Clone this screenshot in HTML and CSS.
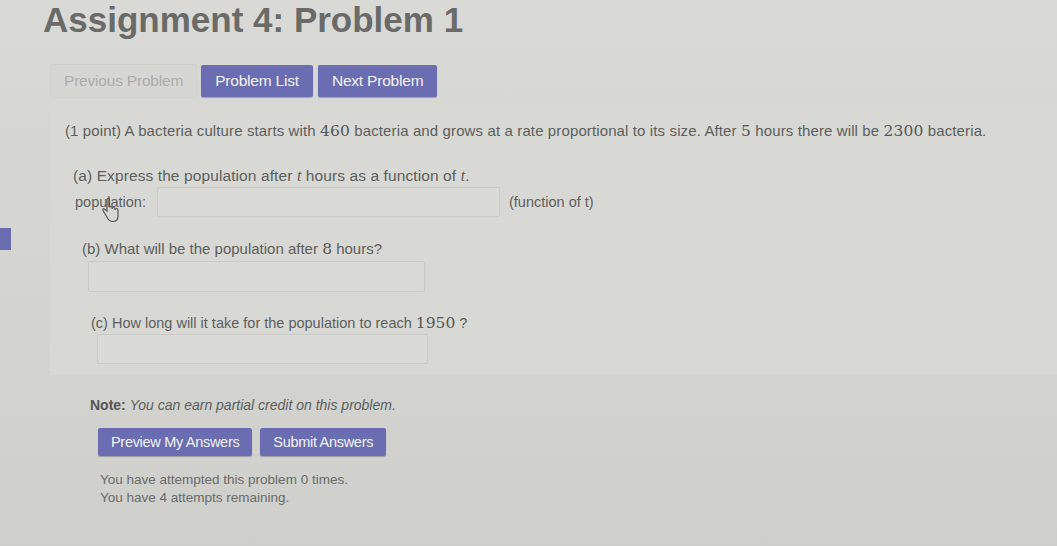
FILE: index.html
```html
<!DOCTYPE html>
<html>
<head>
<meta charset="utf-8">
<link rel="stylesheet" href="styles.css">
</head>
<body>
<div class="page">
  <div class="side-tab"></div>
  <h1 class="title">Assignment 4: Problem 1</h1>
  <div class="nav">
    <span class="btn btn-disabled">Previous Problem</span>
    <span class="btn">Problem List</span>
    <span class="btn">Next Problem</span>
  </div>
  <div class="problem">
    <p class="intro">(1 point) A bacteria culture starts with <span class="m">460</span> bacteria and grows at a rate proportional to its size. After <span class="m">5</span> hours there will be <span class="m">2300</span> bacteria.</p>
    <div class="part part-a">
      <p class="q">(a) Express the population after <span class="mi">t</span> hours as a function of <span class="mi">t</span>.</p>
      <div class="answer-row">
        <span class="label">population:</span>
        <span class="field field-a"></span>
        <span class="hint">(function of t)</span>
        <svg class="cursor" width="22" height="26" viewBox="0 0 22 26"><path d="M7 2 L7 13 L4.5 11 Q2.5 10 3 12.5 L7.5 20 Q9.5 23.5 13 23.5 Q18 23.5 18 18 L18 12 Q18 10.5 16.5 10.5 Q15 10.5 15 12 L15 11 Q15 9.5 13.5 9.5 Q12 9.5 12 11 L12 10 Q12 8.5 10.5 8.5 Q9.5 8.5 9.5 9.5 L9.5 2 Q9.5 0.5 8.3 0.5 Q7 0.5 7 2 Z" fill="none" stroke="#555" stroke-width="1.2"/></svg>
      </div>
    </div>
    <div class="part part-b">
      <p class="q">(b) What will be the population after <span class="m">8</span> hours?</p>
      <span class="field field-b"></span>
    </div>
    <div class="part part-c">
      <p class="q">(c) How long will it take for the population to reach <span class="m">1950</span> ?</p>
      <span class="field field-c"></span>
    </div>
  </div>
  <div class="footer">
    <p class="note"><b>Note:</b> <i>You can earn partial credit on this problem.</i></p>
    <div class="actions">
      <span class="btn btn-small">Preview My Answers</span>
      <span class="btn btn-small">Submit Answers</span>
    </div>
    <p class="attempts">You have attempted this problem 0 times.<br>You have 4 attempts remaining.</p>
  </div>
</div>
</body>
</html>
```
FILE: styles.css
```css
html, body {
  margin: 0;
  padding: 0;
}
body {
  background: linear-gradient(180deg, #d9dad6 0%, #d3d4d0 60%, #cfd0cc 100%);
  font-family: "Liberation Sans", Arial, sans-serif;
  color: #5d5e5c;
  width: 1057px;
  height: 546px;
  overflow: hidden;
}
.page {
  position: relative;
  height: 546px;
}
.side-tab {
  position: absolute;
  left: 0;
  top: 228px;
  width: 11px;
  height: 22px;
  background: #6a6cb2;
}
.title {
  margin: 0;
  padding: 0 0 0 43px;
  font-size: 35px;
  font-weight: bold;
  color: #6a6b69;
  line-height: 40px;
  height: 40px;
  letter-spacing: 0;
}
.nav {
  display: flex;
  gap: 5px;
  margin: 25px 0 0 51px;
}
.btn {
  display: inline-flex;
  align-items: center;
  justify-content: center;
  height: 32px;
  padding: 0 14px;
  background: #6a6db1;
  color: #f2f2f6;
  font-size: 15.5px;
  border-radius: 2px;
  box-shadow: 0 1px 1px rgba(60,60,90,0.35);
  letter-spacing: -0.2px;
}
.btn-disabled {
  background: #d6d7d3;
  color: #acadab;
  box-shadow: 0 0 0 1px #d0d1cd;
  padding: 0 13px;
}
.problem {
  margin: 8px 0 0 50px;
  padding: 16px 0 10px 15px;
  background: #d8d9d5;
  height: 244px;
}
.intro {
  margin: 0;
  font-size: 15px;
  letter-spacing: 0.12px;
  line-height: 20px;
}
.m {
  font-family: "DejaVu Serif", "Liberation Serif", serif;
  font-size: 15.5px;
  color: #555;
}
.mi {
  font-family: "Liberation Serif", serif;
  font-style: italic;
  font-size: 16px;
}
.q {
  margin: 0;
  line-height: 20px;
}
.part-a .q {
  font-size: 15.5px;
  letter-spacing: 0.1px;
}
.part-a {
  margin: 25px 0 0 8px;
}
.answer-row {
  position: relative;
  display: flex;
  align-items: center;
  margin-top: 1px;
}
.label {
  font-size: 14.5px;
  margin-left: 2px;
  width: 82px;
}
.field {
  display: block;
  height: 28px;
  background: #dadbd7;
  border: 1px solid #cacbc7;
  border-radius: 2px;
  box-sizing: border-box;
}
.field-a {
  width: 343px;
  height: 30px;
}
.hint {
  font-size: 14.5px;
  margin-left: 9px;
}
.cursor {
  position: absolute;
  left: 27px;
  top: 11px;
}
.part-b {
  margin: 22px 0 0 17px;
}
.part-b .q {
  font-size: 15px;
}
.part-b .field {
  width: 337px;
  height: 31px;
  margin: 2px 0 0 6px;
}
.part-c {
  margin: 21px 0 0 26px;
}
.part-c .q {
  font-size: 14.5px;
}
.part-c .field {
  width: 331px;
  height: 30px;
  margin: 1px 0 0 6px;
}
.footer {
  margin: 22px 0 0 90px;
}
.note {
  margin: 0;
  font-size: 14px;
  color: #5d5e5c;
}
.note b {
  font-weight: bold;
  color: #555;
}
.actions {
  display: flex;
  gap: 8px;
  margin: 15px 0 0 8px;
}
.btn-small {
  height: 28px;
  font-size: 14.5px;
  padding: 0 13px;
  letter-spacing: -0.3px;
}
.attempts {
  margin: 15px 0 0 10px;
  font-size: 13.5px;
  line-height: 18px;
  color: #6a6b69;
}
```
